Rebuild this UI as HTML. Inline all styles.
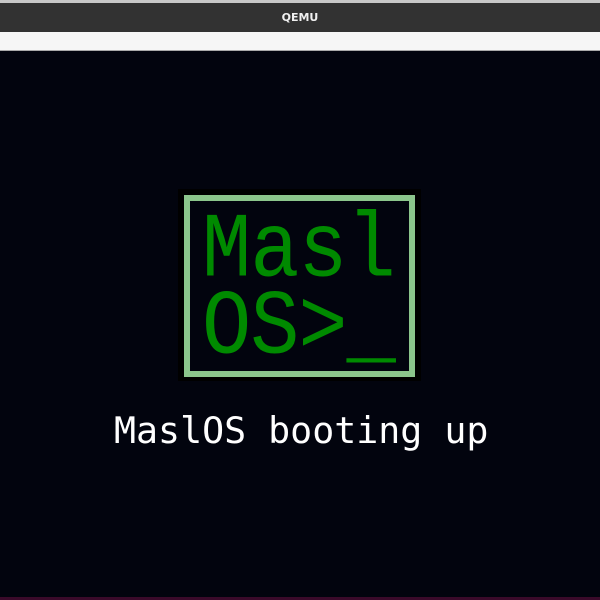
<!DOCTYPE html>
<html><head><style>
body{margin:0;width:600px;height:600px;overflow:hidden;background:#02040e;position:relative;font-family:"DejaVu Sans Mono","Liberation Mono",monospace}
.top{position:absolute;left:0;top:0;width:600px;height:3px;background:#c8c8c8}
.title{position:absolute;left:0;top:3px;width:600px;height:29px;background:#323232;color:#f0f0f0;font:bold 11px "DejaVu Sans","Liberation Sans",sans-serif;text-align:center;line-height:29px}
.bar{position:absolute;left:0;top:32px;width:600px;height:18px;background:#f6f6f6;border-bottom:1px solid #aaa}
.box{position:absolute;left:178px;top:189px;width:243px;height:192px;background:#000}
.frame{position:absolute;left:184px;top:195px;width:219px;height:170px;border:6px solid #8cc68c;background:#02040e}
.l{position:absolute;color:#008a00;font-family:"Liberation Mono",monospace;font-size:82px;letter-spacing:-1px;line-height:1;transform:scaleY(1.12);transform-origin:0 0}
.msg{position:absolute;left:114px;top:413px;color:#fff;font-size:36.6px;line-height:1;white-space:pre}
.bot{position:absolute;left:0;top:597px;width:600px;height:3px;background:#3a0a2a}
</style></head><body>
<div class="top"></div>
<div class="title">QEMU</div>
<div class="bar"></div>
<div class="box"></div>
<div class="frame"></div>
<div class="l" style="left:202px;top:206px">Masl</div>
<div class="l" style="left:202px;top:283px">OS&gt;_</div>
<div class="msg">MaslOS booting up</div>
<div class="bot"></div>
</body></html>
